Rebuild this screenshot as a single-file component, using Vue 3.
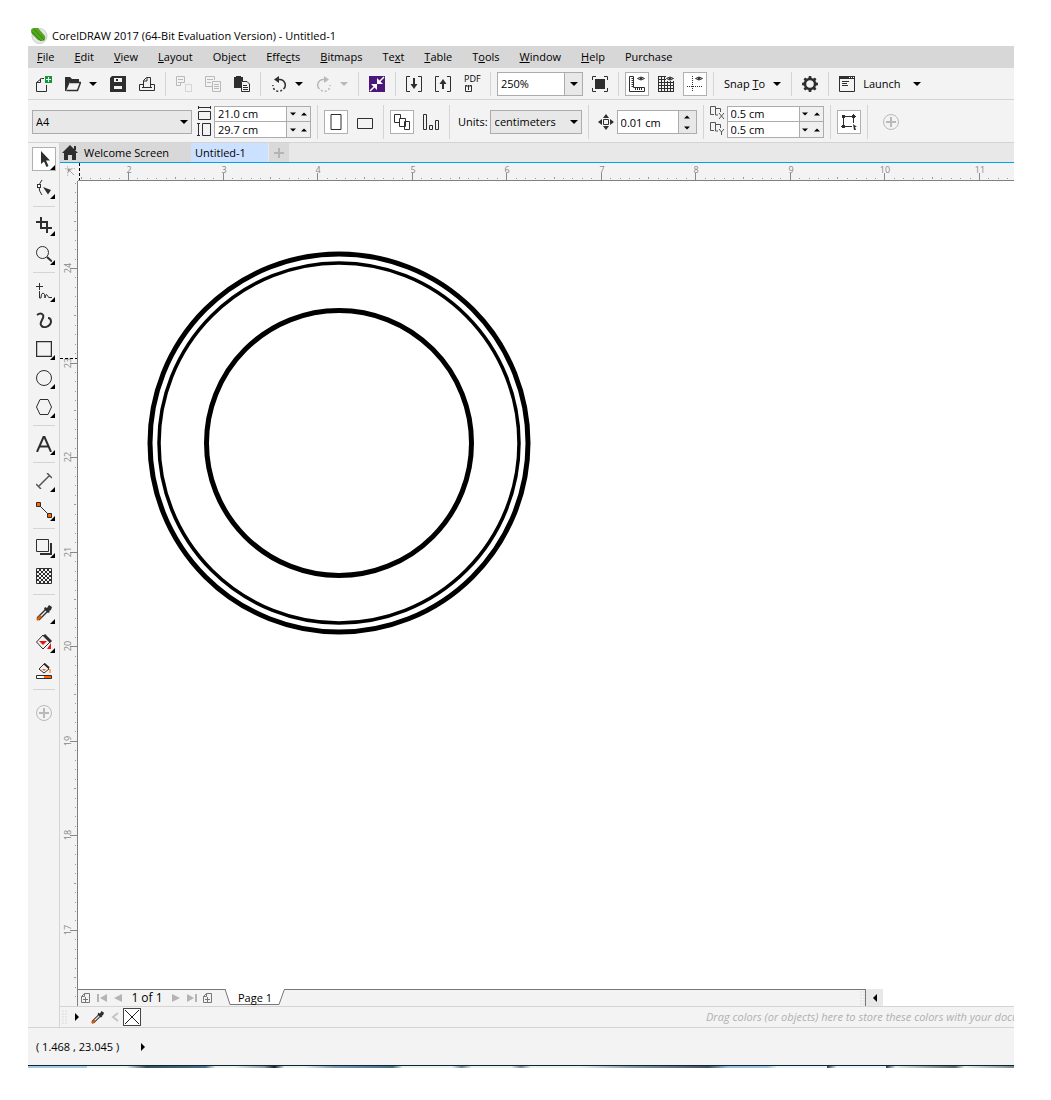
<script setup>
import { computed, h, onBeforeUnmount, onMounted, ref } from 'vue'

const K = '#2e2e2e'
const G = '#b9b9b9'
const line = (d, c = K, extra = '') => `<path d="${d}" fill="none" stroke="${c}" ${extra}/>`
const fill = (d, c = K) => `<path d="${d}" fill="${c}"/>`
const eye = '<path d="M8.500 2.500Q12 -.5 15.500 2.500Q12 5.500 8.500 2.500z" fill="none" stroke="#2e2e2e"/><circle cx="12" cy="2.500" r="1.200" fill="#2e2e2e"/>'
const checks = Array.from({ length: 49 }, (_, i) => i)
  .filter((i) => ((i % 7) + Math.floor(i / 7)) % 2 === 1)
  .map((i) => fill(`M${1 + (i % 7) * 2} ${1 + Math.floor(i / 7) * 2}h2v2h-2z`))
  .join('')
const teeth = [0, 45, 90, 135, 180, 225, 270, 315]
  .map((a) => `<rect x="6.500" y="0" width="3" height="4" rx="1" fill="${K}" transform="rotate(${a} 8 8)"/>`)
  .join('')

const icons = {
  create: line('M8 2.5H5.500L.5 6.500V15.500H10.500V9') + line('M4.500 2.500V6.500H.5') + fill('M9 0h7v7h-7z', '#109a3c') + fill('M12 1h1v2h2v1h-2v2h-1v-2h-2v-1h2z', '#fff'),
  open: fill('M0 1h5l2 2h7v3H5L1 15H0z') + line('M5 6.500H15.500L12.500 14.500H1.500', K, 'stroke-width="1.500"'),
  save: fill('M2 0h14v16h-16v-14z') + fill('M4 2h8v4h-8z', '#f3f3f3') + fill('M6 3h2v2h-2z') + fill('M4 10h8v3h-8z', '#f3f3f3'),
  print: line('M4.500 11.500V4.500L7.500 1.500H11.500V11.500M4.500 5H8V2M4.500 8.500H.5V14.500H15.500V8.500H11.500M3 11.500H13'),
  cut: line('M.5 .5H8.500V6.500H4.500V9.500H.5zM2 3.500h5M2 6.500h2', G) + line('M9.500 8.500H15.500V15.500H9.500z', G, 'stroke-dasharray="1 1"'),
  copy: line('M7 10.500H.5V.5H9.500V4M2 3.500h6M2 6.500h4', G) + line('M7.500 5.500H15.500V15.500H7.500zM9 8.500h5M9 10.500h5M9 12.500h5', G),
  paste: fill('M0 1h2V0h5v1h2v4H7v7H0z') + line('M7.500 5.500H13L15.500 8V15.500H7.500zM9 9.500h4M9 11.500h5M9 13.500h5'),
  undo: line('M5 3.500H8.500A5.500 5.500 0 0 1 12.500 13', K, 'stroke-width="1.500"') + line('M11 14A5.500 5.500 0 0 1 2 9', K, 'stroke-width="1.500" stroke-dasharray="2 2"') + fill('M3 3.500L8 0V7z'),
  redo: line('M11 3.500H7.500A5.500 5.500 0 0 0 3.500 13', G, 'stroke-width="1.500"') + line('M5 14A5.500 5.500 0 0 0 14 9', G, 'stroke-width="1.500" stroke-dasharray="2 2"') + fill('M13 3.500L8 0V7z', G),
  search: fill('M0 0h16v16H0z', '#4b1778') + line('M1 15L6 10M15 1L10 6', '#fff', 'stroke-width="1.500"') + fill('M2 8H8V14zM8 2V8H14z', '#fff'),
  importer: line('M4 .5H.5V15.500H4M12 .5H15.500V15.500H12') + line('M8 2V10', K, 'stroke-width="2"') + fill('M4.500 8H11.500L8 13z'),
  exporter: line('M4 .5H.5V15.500H4M12 .5H15.500V15.500H12') + line('M8 13V6', K, 'stroke-width="2"') + fill('M4.500 8H11.500L8 3z'),
  pdf: line('M3 9.500H1.500V15.500H7.500V9.500H6M4.500 14V9M2.500 11L4.500 9L6.500 11'),
  full: fill('M3 3h10v10H3z') + line('M.5 4V.5H4M12 .5H15.500V4M15.500 12V15.500H12M4 15.500H.5V12'),
  rulers: line('M.5 .5H4.500V11.500H15.500V15.500H.5zM2.500 2.500h2M2.500 4.500h2M2.500 6.500h2M2.500 8.500h2M2.500 10.500h2M6.500 12v2M8.500 12v2M10.500 12v2M12.500 12v2') + eye,
  grid: line('M.5 .5V15.500M3.500 .5V15.500M6.500 .5V15.500M9.500 5V15.500M12.500 5V15.500M15.500 5V15.500M0 .5H8M0 3.500H8M0 6.500H16M0 9.500H16M0 12.500H16M0 15.500H16') + eye,
  guides: line('M5.500 0V16', K, 'stroke-dasharray="1 1"') + line('M0 10.500H16', K, 'stroke-dasharray="1 1"') + eye,
  gear: `<circle cx="8" cy="8" r="5" fill="none" stroke="${K}" stroke-width="2.500"/>` + teeth,
  launch: line('M.5 .5H15.500V15.500H.5z') + fill('M0 0h16v3H0z') + fill('M10 1h1v1h-1zM12 1h1v1h-1zM14 1h1v1h-1z', '#fff') + line('M3 5.500h7M3 7.500h5M3 9.500h6'),
  portrait: line('M3 .5H13V15.500H3z'),
  landscape: line('M.5 4.500H15.500V14.500H.5z'),
  pages: line('M.5 .5H6.500V8.500H.5z') + '<path d="M5.500 4.500H11.500V12.500H5.500zM10.500 7.500H15.500V15.500H10.500z" fill="#fff" stroke="#2e2e2e"/>',
  bars: line('M.5 .5H3.500V15.500H.5zM6.500 11.500H9.500V15.500H6.500zM12.500 6.500H15.500V15.500H12.500z'),
  nudge: line('M5.500 5.500H10.500V10.500H5.500z') + fill('M8 0L11 4H5zM8 16L11 12H5zM0 8L4 5V11zM16 8L12 5V11z'),
  transformBox: line('M2.500 1V14M12.500 0V9M1 2.500H15M0 12.500H11') + fill('M1 1h3v3h-3zM11 1h3v3h-3zM1 11h3v3h-3zM12 10l4 3h-2l1 3h-2z'),
  add: `<circle cx="8" cy="8" r="7.500" fill="none" stroke="${G}"/>` + line('M8 3V13M3 8H13', G, 'stroke-width="2"'),
  widthDim: line('M1.500 5.500H13.500V13.500H1.500zM2 1.500H13M1.500 0v3M13.500 0v3'),
  heightDim: line('M5.500 1.500H13.500V13.500H5.500zM1.500 2V13M0 1.500h3M0 13.500h3'),
  dupX: line('M4 8.500H.5V.5H5.500V3M5.500 9V2.500H10.500V6M5.500 9H8', '#555') + line('M9 7L14 13M14 7L9 13', '#555'),
  dupY: line('M4 8.500H.5V.5H5.500V3M5.500 9V2.500H10.500V6M5.500 9H8', '#555') + line('M9 7L11.500 10L14 7M11.500 10V13', '#555'),
  pick: fill('M5 0V13L8 10.500L10.500 16L12.500 15L10 9.500H14z'),
  shape: line('M6 0Q0 7 6 15') + '<rect x="1.500" y="4.500" width="3" height="3" fill="#fff" stroke="#2e2e2e"/>' + fill('M7 7L15 10L12 14.500z'),
  crop: line('M5 0V11H16M0 5H11V16', K, 'stroke-width="2"'),
  zoom: '<circle cx="6.500" cy="6.500" r="6" fill="none" stroke="#2e2e2e"/>' + line('M11 11L16 15.500', K, 'stroke-width="2"'),
  freehand: line('M3.500 0V7M0 3.500H7') + line('M3.500 8V15H5Q5 10 7 10T9 15Q10 10 11 12T13 14.500H16'),
  media: line('M1 3Q5 0 7 3C9 6 3 10 5 13C7 17 14 15 15 10Q15 6 12 6', K, 'stroke-width="2"'),
  rect: line('M.5 .5H15.500V15.500H.5z', K, 'stroke-width="1.500"'),
  ellipse: '<circle cx="8" cy="8" r="7.500" fill="none" stroke="#2e2e2e"/>',
  polygon: line('M4 .5H12L15.500 8L12 15.500H4L.5 8z'),
  letter: line('M1 16L7.500 1H8.500L15 16M4 10.500H12', K, 'stroke-width="2"'),
  dimension: line('M2 14L14 2M0 11L5 16M11 0L16 5', '#555', 'stroke-width="1.500"'),
  connector: line('M3 3L13 13') + '<path d="M.5 .5H4.500V4.500H.5zM11.500 11.500H15.500V15.500H11.500z" fill="#f60" stroke="#2e2e2e"/>',
  shadow: line('M.5 .5H12.500V12.500H.5z') + line('M15 4V15H4', K, 'stroke-width="2"'),
  transparency: line('M.5 .5H15.500V15.500H.5z') + checks,
  dropper: line('M2 14L11 5', K, 'stroke-width="4"') + line('M4 12L11 5', '#eee', 'stroke-width="1.500"') + line('M1 15L5 11', '#e65c00', 'stroke-width="2.500"') + fill('M9 2L11 3L13 0L16 2L15 5L13 6L14 7L12 8L8 4z'),
  bucket: line('M7 1L14 8L7 15L.5 8z') + line('M8 1L15 8', K, 'stroke-width="3"') + fill('M3 7H11L7 11z', '#e11') + fill('M15 9V15H11z', '#e11'),
  smart: line('M8 1L13 6L8 10L3 6z') + line('M8 .5L13 5', K, 'stroke-width="2"') + fill('M6 6h4l-2 2z', '#f60') + line('M14 6V10', '#f60') + '<path d="M.5 12.500H15.500V15.500H.5z" fill="#fff" stroke="#2e2e2e"/>' + fill('M8 13h7v2H8z', '#f60'),
  newPage: line('M6.500 3.500H11.500V12.500H3.500V6.500L6.500 3.500V6.500H3.500', '#777') + line('M7.500 7V12M5 9.500H10', '#777'),
  origin: line('M4 4L12 12', '#888') + line('M0 3.500H13M3.500 0V13', '#888', 'stroke-dasharray="1 1"') + fill('M4 4H9L4 9z', '#999'),
  home: fill('M8 0L16 8H14V15H10V10H6V15H2V8H0zM12 1h2v4h-2z'),
}

const Icon = (p) =>
  h('svg', { width: 16, height: 16, viewBox: '0 0 16 16', 'aria-hidden': 'true', innerHTML: icons[p.name] })
Icon.props = ['name']

const arrows = { down: 'M0 2H8L4 6z', up: 'M1 5.500L4 2.500L7 5.500z', small: 'M1 2.500H7L4 5.500z', right: 'M2 0V8L6 4z', left: 'M6 0V8L2 4z' }
const Arrow = (p) =>
  h('svg', { width: 8, height: 8, viewBox: '0 0 8 8', 'aria-hidden': 'true' }, [h('path', { d: arrows[p.dir], fill: p.color || '#000' })])
Arrow.props = ['dir', 'color']

const menu = [
  ['', 'F', 'ile'], ['', 'E', 'dit'], ['', 'V', 'iew'], ['', 'L', 'ayout'], ['Ob', 'j', 'ect'], ['Effe', 'c', 'ts'],
  ['', 'B', 'itmaps'], ['Te', 'x', 't'], ['', 'T', 'able'], ['T', 'o', 'ols'], ['', 'W', 'indow'], ['', 'H', 'elp'], ['Purchase', '', ''],
]

const tools = [
  ['pick', 1, 'Pick'], ['shape', 1, 'Shape'], null, ['crop', 1, 'Crop'], ['zoom', 1, 'Zoom'], null,
  ['freehand', 1, 'Freehand'], ['media', 0, 'Artistic media'], ['rect', 1, 'Rectangle'], ['ellipse', 1, 'Ellipse'], ['polygon', 1, 'Polygon'], null,
  ['letter', 1, 'Text'], null, ['dimension', 1, 'Dimension'], ['connector', 1, 'Connector'], null,
  ['shadow', 1, 'Drop shadow'], ['transparency', 0, 'Transparency'], null,
  ['dropper', 1, 'Eyedropper'], ['bucket', 1, 'Fill'], ['smart', 0, 'Smart fill'], null,
]

// Ruler marks cover only the visible part of the drawing window.
const pxPerCm = 94.56
const ruler = ref(null)
const side = ref(null)
const across = ref(0)
const down = ref(0)
const measure = () => {
  across.value = ruler.value.clientWidth
  down.value = side.value.clientHeight
}
onMounted(() => {
  measure()
  window.addEventListener('resize', measure)
})
onBeforeUnmount(() => window.removeEventListener('resize', measure))

const hTicks = computed(() => {
  const out = []
  for (let n = 15; ; n++) {
    const x = Math.round(50 + (n / 10 - 2) * pxPerCm)
    if (x > across.value - 3) return out
    out.push({ x, n })
  }
})
const vTicks = computed(() => {
  const out = []
  for (let n = 249; ; n--) {
    const y = Math.round(87 + (24 - n / 10) * pxPerCm)
    if (y > down.value - 3) return out
    out.push({ y, n })
  }
})

const zoomLevel = ref('250%')
const nudge = ref('0.01 cm')
const size = [
  { icon: 'widthDim', label: 'Page width', value: '21.0 cm' },
  { icon: 'heightDim', label: 'Page height', value: '29.7 cm' },
]
const duplicate = [
  { icon: 'dupX', label: 'Duplicate distance X', value: '0.5 cm' },
  { icon: 'dupY', label: 'Duplicate distance Y', value: '0.5 cm' },
]
</script>

<template>
  <div class="app">
    <header class="title">
      <svg width="18" height="18" viewBox="0 0 18 18" aria-hidden="true">
        <circle cx="9.500" cy="9" r="7.500" fill="#e6e6e6" stroke="#ccc" />
        <path d="M1 4Q1 1 4 1H8L15 9Q16 13 13 14Q10 14 8 13L2 7Q1 6 1 4z" fill="#56a51c" />
        <path d="M4 2L14 13M2 5L11 14" stroke="#35851a" />
      </svg>
      <span>CorelDRAW 2017 (64-Bit Evaluation Version) - Untitled-1</span>
    </header>

    <nav class="menu">
      <button v-for="m in menu" :key="m.join('')">{{ m[0] }}<u>{{ m[1] }}</u>{{ m[2] }}</button>
    </nav>

    <div class="bar standard">
      <button class="cell" aria-label="New"><Icon name="create" /></button>
      <div class="split">
        <button class="cell" aria-label="Open"><Icon name="open" /></button>
        <button class="drop" aria-label="Recent"><Arrow dir="down" /></button>
      </div>
      <button class="cell" aria-label="Save"><Icon name="save" /></button>
      <button class="cell" aria-label="Print"><Icon name="print" /></button>
      <i class="sep"></i>
      <button class="cell" aria-label="Cut"><Icon name="cut" /></button>
      <button class="cell" aria-label="Copy"><Icon name="copy" /></button>
      <button class="cell" aria-label="Paste"><Icon name="paste" /></button>
      <i class="sep"></i>
      <div class="split">
        <button class="cell" aria-label="Undo"><Icon name="undo" /></button>
        <button class="drop" aria-label="Undo list"><Arrow dir="down" /></button>
      </div>
      <div class="split">
        <button class="cell" aria-label="Redo"><Icon name="redo" /></button>
        <button class="drop" aria-label="Redo list"><Arrow dir="down" color="#b9b9b9" /></button>
      </div>
      <i class="sep"></i>
      <button class="cell" aria-label="Search content"><Icon name="search" /></button>
      <i class="sep"></i>
      <button class="cell" aria-label="Import"><Icon name="importer" /></button>
      <button class="cell" aria-label="Export"><Icon name="exporter" /></button>
      <button class="cell pdf" aria-label="Publish to PDF"><Icon name="pdf" /><span>PDF</span></button>
      <i class="sep"></i>
      <div class="combo">
        <input v-model="zoomLevel" aria-label="Zoom level" />
        <button aria-label="Zoom levels"><Arrow dir="down" /></button>
      </div>
      <button class="cell" aria-label="Full screen"><Icon name="full" /></button>
      <i class="sep"></i>
      <button class="cell on" aria-label="Show rulers"><Icon name="rulers" /></button>
      <button class="cell" aria-label="Show grid"><Icon name="grid" /></button>
      <button class="cell on" aria-label="Show guidelines"><Icon name="guides" /></button>
      <i class="sep"></i>
      <button class="labelled"><span>Snap <u>T</u>o</span><Arrow dir="down" /></button>
      <i class="sep"></i>
      <button class="cell" aria-label="Options"><Icon name="gear" /></button>
      <i class="sep"></i>
      <button class="labelled launch"><Icon name="launch" /><span>Launch</span><Arrow dir="down" /></button>
    </div>

    <div class="bar property">
      <div class="select paper">
        <select aria-label="Page size"><option>A4</option></select>
        <Arrow dir="down" />
      </div>
      <div class="pair">
        <div v-for="s in size" :key="s.label" class="spin">
          <Icon :name="s.icon" />
          <input :aria-label="s.label" :value="s.value" />
          <span class="steps">
            <button aria-label="Decrease"><Arrow dir="small" /></button>
            <button aria-label="Increase"><Arrow dir="up" /></button>
          </span>
        </div>
      </div>
      <i class="sep"></i>
      <button class="cell on" aria-label="Portrait"><Icon name="portrait" /></button>
      <button class="cell" aria-label="Landscape"><Icon name="landscape" /></button>
      <i class="sep"></i>
      <button class="cell on" aria-label="All pages"><Icon name="pages" /></button>
      <button class="cell" aria-label="Current page"><Icon name="bars" /></button>
      <i class="sep"></i>
      <div class="units">
        <label for="units">Units:</label>
        <div class="select">
          <select id="units"><option>centimeters</option></select>
          <Arrow dir="down" />
        </div>
      </div>
      <i class="sep"></i>
      <div class="nudge">
        <Icon name="nudge" />
        <input v-model="nudge" aria-label="Nudge distance" />
        <span class="stack">
          <button aria-label="Increase"><Arrow dir="up" /></button>
          <button aria-label="Decrease"><Arrow dir="small" /></button>
        </span>
      </div>
      <i class="sep"></i>
      <div class="pair">
        <div v-for="s in duplicate" :key="s.label" class="spin">
          <Icon :name="s.icon" />
          <input :aria-label="s.label" :value="s.value" />
          <span class="steps">
            <button aria-label="Decrease"><Arrow dir="small" /></button>
            <button aria-label="Increase"><Arrow dir="up" /></button>
          </span>
        </div>
      </div>
      <i class="sep"></i>
      <button class="cell on" aria-label="Treat as filled"><Icon name="transformBox" /></button>
      <i class="sep"></i>
      <button class="cell customize" aria-label="Customize"><Icon name="add" /></button>
    </div>

    <div class="work">
      <aside class="toolbox">
        <template v-for="(t, i) in tools" :key="i">
          <i v-if="!t" class="sep"></i>
          <button v-else class="cell" :class="{ on: i === 0 }" :aria-label="t[2]">
            <Icon :name="t[0]" />
            <svg v-if="t[1]" class="flyout" width="5" height="5" viewBox="0 0 5 5"><path d="M5 0V5H0z" /></svg>
          </button>
        </template>
        <button class="cell customize" aria-label="Customize toolbox"><Icon name="add" /></button>
      </aside>

      <main class="document">
        <div class="tabs">
          <button class="welcome"><Icon name="home" /><span>Welcome Screen</span></button>
          <button class="current">Untitled-1</button>
          <button class="plus" aria-label="New document">
            <svg width="10" height="10" viewBox="0 0 10 10"><path d="M5 0V10M0 5H10" stroke="#b4b4b4" stroke-width="2" /></svg>
          </button>
        </div>

        <div class="view">
          <div class="corner"><Icon name="origin" /></div>
          <div ref="ruler" class="hruler">
            <svg width="100%" height="17">
              <g v-for="t in hTicks" :key="t.n">
                <path v-if="t.n % 10 === 0" :d="`M${t.x + 0.5} 10V17`" stroke="#888" />
                <path v-else :d="`M${t.x + 0.5} ${t.n % 5 ? 15 : 14}V16`" stroke="#999" />
                <text v-if="t.n % 10 === 0" :x="t.x + 1" y="10" text-anchor="middle">{{ t.n / 10 }}</text>
              </g>
              <path d="M1.500 0V17" stroke="#000" stroke-dasharray="3 2" />
            </svg>
          </div>
          <div ref="side" class="vruler">
            <svg width="17" height="100">
              <g v-for="t in vTicks" :key="t.n">
                <path v-if="t.n % 10 === 0" :d="`M10 ${t.y + 0.5}H17`" stroke="#888" />
                <path v-else :d="`M${t.n % 5 ? 15 : 14} ${t.y + 0.5}H16`" stroke="#999" />
                <text v-if="t.n % 10 === 0" :transform="`translate(11 ${t.y}) rotate(-90)`" text-anchor="middle">{{ t.n / 10 }}</text>
              </g>
              <path d="M0 177.500H17" stroke="#000" stroke-dasharray="3 2" />
            </svg>
          </div>
          <div class="canvas">
            <svg width="100%" height="400" aria-label="Drawing">
              <g fill="none" stroke="#000">
                <circle cx="261" cy="262" r="189" stroke-width="5" />
                <circle cx="261" cy="262" r="180" stroke-width="3.500" />
                <circle cx="261" cy="262" r="132.500" stroke-width="5" />
              </g>
            </svg>
          </div>
          <div class="pagebar">
            <div class="pages">
              <button aria-label="Add page before"><Icon name="newPage" /></button>
              <button aria-label="First page">
                <svg width="12" height="10" viewBox="0 0 12 10"><path d="M1 1H3V9H1zM11 1V9L4 5z" fill="#b4b4b4" /></svg>
              </button>
              <button aria-label="Previous page">
                <svg width="12" height="10" viewBox="0 0 12 10"><path d="M10 1V9L2 5z" fill="#b4b4b4" /></svg>
              </button>
              <span class="count">1 of 1</span>
              <button aria-label="Next page">
                <svg width="12" height="10" viewBox="0 0 12 10"><path d="M2 1V9L10 5z" fill="#b4b4b4" /></svg>
              </button>
              <button aria-label="Last page">
                <svg width="12" height="10" viewBox="0 0 12 10"><path d="M1 1V9L8 5zM9 1H11V9H9z" fill="#b4b4b4" /></svg>
              </button>
              <button aria-label="Add page after"><Icon name="newPage" /></button>
              <button class="pagetab">
                <svg width="60" height="17" viewBox="0 0 60 17" aria-hidden="true">
                  <path d="M0 0L5 15.500H54L59.500 0" fill="#fff" stroke="#777" />
                  <path d="M1 .5H59" stroke="#fff" />
                </svg>
                <span>Page 1</span>
              </button>
              <i class="grip"></i>
            </div>
            <button class="scroll" aria-label="Scroll left"><Arrow dir="left" /></button>
          </div>
        </div>

        <div class="palette">
          <i class="grip"></i>
          <button aria-label="Palette menu"><Arrow dir="right" /></button>
          <button class="pickcolor" aria-label="Pick color"><Icon name="dropper" /></button>
          <button class="back" aria-label="Scroll palette">
            <svg width="8" height="10" viewBox="0 0 8 10"><path d="M7 1L2 5L7 9" fill="none" stroke="#c4c4c4" stroke-width="2" /></svg>
          </button>
          <button class="none" aria-label="No color">
            <svg width="16" height="16" viewBox="0 0 16 16"><path d="M1 1L15 15M15 1L1 15" stroke="#222" /></svg>
          </button>
          <p>Drag colors (or objects) here to store these colors with your document</p>
        </div>
      </main>
    </div>

    <footer class="status">
      <span>( 1.468 , 23.045 )</span>
      <button aria-label="Status menu"><Arrow dir="right" /></button>
    </footer>
    <div class="strip"></div>
  </div>
</template>

<style>
body { margin: 0; background: #fff; }
</style>

<style scoped>
.app {
  box-sizing: border-box;
  min-height: 100vh;
  padding: 25px 37px 32px 28px;
  display: flex;
  flex-direction: column;
  font: 11px/16px "Open Sans", "Noto Sans", sans-serif;
  color: #000;
}
.app * { box-sizing: border-box; }
svg { display: block; flex: none; }
button, input, select {
  font: inherit;
  color: inherit;
  margin: 0;
  padding: 0;
  border: 0;
  border-radius: 0;
  background: none;
  min-width: 0;
}
button { display: flex; align-items: center; justify-content: center; flex: none; }
select { appearance: none; width: 100%; height: 100%; padding-left: 4px; }
input { background: #fff; padding-left: 3px; }

.title { display: flex; align-items: center; gap: 4px; height: 21px; padding-left: 2px; }
.menu { display: flex; gap: 20px; height: 22px; padding-left: 9px; background: #d7d7d7; overflow: hidden; }
.menu button { display: block; white-space: nowrap; }

.bar { display: flex; align-items: center; gap: 5px; padding-left: 4px; background: #f3f3f3; border-bottom: 1px solid #d4d4d4; overflow: hidden; }
.standard { height: 32px; }
.property { height: 43px; padding-top: 2px; }
.cell { position: relative; width: 24px; height: 24px; border: 1px solid transparent; }
.cell.on { background: #fff; border-color: #b0b0b0; }
.sep { flex: none; width: 1px; height: 24px; margin: 0 1px; background: #d4d4d4; }
.property .sep { height: 34px; }
.split { display: flex; flex: none; }
.drop { width: 16px; }
.pdf span { position: absolute; left: 3px; top: 1px; font-size: 9px; line-height: 9px; }
.combo { display: flex; flex: none; width: 86px; height: 24px; border: 1px solid #acacac; }
.combo input { flex: 1; }
.combo button { width: 18px; border-left: 1px solid #acacac; background: #e8e8e8; }
.labelled { gap: 8px; padding: 0 4px; white-space: nowrap; }
.launch span { margin-right: 4px; }

.select { position: relative; flex: none; width: 92px; height: 24px; border: 1px solid #acacac; background: #e8e8e8; }
.select svg { position: absolute; right: 3px; top: 7px; pointer-events: none; }
.paper { width: 160px; }
.paper select { padding-left: 3px; }
.pair { flex: none; display: flex; flex-direction: column; }
.spin { display: flex; height: 16px; }
.spin > svg { margin-right: 1px; }
.spin input { width: 73px; border: 1px solid #acacac; }
.spin + .spin input, .spin + .spin .steps { border-top: 0; }
.steps { display: flex; width: 24px; border: 1px solid #acacac; border-left: 0; background: #f0f0f0; }
.steps button { flex: 1; }
.units { display: flex; align-items: center; gap: 2px; padding-left: 2px; }
.nudge { display: flex; align-items: center; height: 24px; padding-left: 3px; }
.nudge svg { margin-right: 3px; }
.nudge input { width: 62px; height: 24px; border: 1px solid #acacac; }
.stack { display: flex; flex-direction: column; width: 18px; height: 24px; border: 1px solid #acacac; border-left: 0; background: #e8e8e8; }
.stack button { flex: 1; }
.stack svg { margin: 0; }
.bar .customize { margin-left: 5px; }

.work { flex: 1; display: flex; }
.toolbox { flex: none; width: 32px; display: flex; flex-direction: column; gap: 5px; padding: 4px 3px 0 4px; background: #f3f3f3; border-right: 1px solid #d4d4d4; }
.toolbox .sep { width: 22px; height: 1px; margin: 1px; }
.toolbox .customize { margin-top: 5px; }
.flyout { position: absolute; right: 0; bottom: 0; }

.document { flex: 1; min-width: 0; display: flex; flex-direction: column; }
.tabs { display: flex; height: 20px; background: #e8e8e8; border-bottom: 1px solid #00a2ed; }
.tabs button { height: 19px; }
.welcome { width: 131px; gap: 6px; padding-left: 2px; justify-content: flex-start; background: #d8d8d8; }
.current { width: 77px; padding-left: 4px; justify-content: flex-start; background: #cce0ff; }
.plus { width: 20px; margin-left: 1px; background: #d9d9d9; }

.view { flex: 1; display: grid; grid-template-columns: 18px minmax(0, 1fr); grid-template-rows: 18px 1fr auto; }
.view text { font-size: 9px; fill: #888; }
.corner { display: flex; align-items: center; padding-left: 5px; overflow: hidden; background: #f3f3f3; }
.corner svg { width: 12px; height: 12px; }
.hruler { height: 18px; background: #f3f3f3; border-bottom: 1px solid #808080; overflow: hidden; }
.vruler { grid-row: 2 / 4; display: flex; overflow: hidden; background: #f3f3f3; border-right: 1px solid #808080; }
.canvas { display: flex; overflow: hidden; background: #fff; }
.canvas svg, .vruler svg { height: auto; }
.pagebar { display: flex; height: 17px; }
.pages { flex: 0 1 788px; display: flex; align-items: center; background: #f3f3f3; border-top: 1px solid #777; border-right: 1px solid #777; }
.pages button { width: 16px; height: 16px; }
.count { width: 42px; text-align: center; font-size: 12px; }
.pages .pagetab { position: relative; width: 60px; height: 17px; margin: -1px 0 0 9px; }
.pagetab svg { position: absolute; left: 0; top: 0; }
.pagetab span { position: relative; }
.grip { flex: none; width: 5px; height: 14px; background: radial-gradient(circle at 1px 1px, #c8c8c8 0, transparent 1px) 0 0 / 3px 3px; }
.pages .grip { margin-left: auto; }
.pages .scroll, .scroll { width: 17px; background: #e8e8e8; }

.palette { display: flex; align-items: center; gap: 4px; height: 21px; padding-left: 2px; background: #f3f3f3; border-top: 1px solid #d4d4d4; }
.palette button { width: 12px; height: 18px; }
.palette .pickcolor { width: 20px; }
.pickcolor svg { width: 13px; height: 13px; }
.palette .back { width: 8px; }
.palette .none { width: 18px; background: #fff; border: 1px solid #444; }
.palette p { flex: 0 1 308px; margin: 0 0 0 auto; overflow: hidden; white-space: nowrap; font-style: italic; color: #b0b0b0; }

.status { display: flex; align-items: center; gap: 20px; height: 38px; padding-left: 8px; background: #f3f3f3; border-top: 1px solid #d4d4d4; }
.strip {
  height: 3px;
  border-top: 1px solid #0d2530;
  background: linear-gradient(90deg, #a9c8e0 0 6%, #e8f0f0 6% 10%, #35505c 12%, #4a6f85 18%, #e8f0f0 19% 21%, #8a9a9a 24%, #123 25%, #e8f0f0 26% 28%, #7b9ab0 31%, #4a6f85 37%, #e8f0f0 38% 43%, #6b8790 44%, #e8f0f0 45% 49%, #789 50%, #e8f0f0 51% 56%, #89a 61%, #445068 69%, #9fc2d8 71% 75%, #e8f4f8 76% 81%, #234 81%, #e8f4f8 82% 87%, #234 87%, #e8f0f0 88%, #566 94%, #e8f0f0 95%, #788 100%);
}
</style>
